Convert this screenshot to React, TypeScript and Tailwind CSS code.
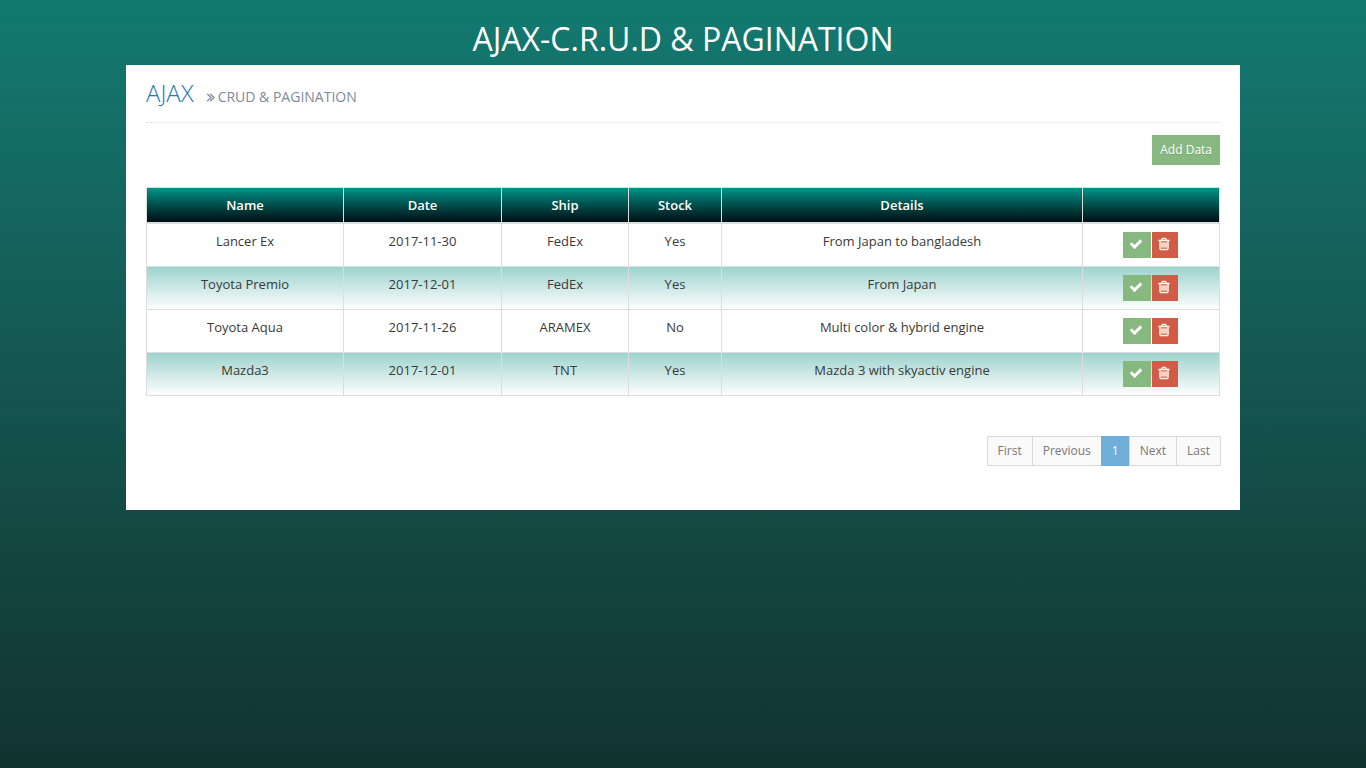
import type { ReactNode } from 'react';

type Shipment = {
  name: string;
  date: string;
  ship: string;
  stock: string;
  details: string;
};

const shipments: Shipment[] = [
  { name: 'Lancer Ex', date: '2017-11-30', ship: 'FedEx', stock: 'Yes', details: 'From Japan to bangladesh' },
  { name: 'Toyota Premio', date: '2017-12-01', ship: 'FedEx', stock: 'Yes', details: 'From Japan' },
  { name: 'Toyota Aqua', date: '2017-11-26', ship: 'ARAMEX', stock: 'No', details: 'Multi color & hybrid engine' },
  { name: 'Mazda3', date: '2017-12-01', ship: 'TNT', stock: 'Yes', details: 'Mazda 3 with skyactiv engine' },
];

const pages = ['First', 'Previous', '1', 'Next', 'Last'];

function Icon({ path, className }: { path: string; className: string }) {
  return (
    <svg viewBox="0 0 1792 1792" fill="currentColor" aria-hidden="true" className={className}>
      <path d={path} />
    </svg>
  );
}

const checkPath =
  'M1671 566q0 40-28 68l-724 724-136 136q-28 28-68 28t-68-28l-136-136-362-362q-28-28-28-68t28-68l136-136q28-28 68-28t68 28l294 295 656-657q28-28 68-28t68 28l136 136q28 28 28 68z';
const trashPath =
  'M704 736v576q0 14-9 23t-23 9h-64q-14 0-23-9t-9-23v-576q0-14 9-23t23-9h64q14 0 23 9t9 23zm256 0v576q0 14-9 23t-23 9h-64q-14 0-23-9t-9-23v-576q0-14 9-23t23-9h64q14 0 23 9t9 23zm256 0v576q0 14-9 23t-23 9h-64q-14 0-23-9t-9-23v-576q0-14 9-23t23-9h64q14 0 23 9t9 23zm128 724v-948h-896v948q0 22 7 40.5t14.5 27 10.5 8.5h832q3 0 10.5-8.5t14.5-27 7-40.5zm-672-1076h448l-48-117q-7-9-17-11h-317q-10 2-17 11zm928 32v64q0 14-9 23t-23 9h-96v948q0 83-47 143.5t-113 60.5h-832q-66 0-113-58.5t-47-141.5v-952h-96q-14 0-23-9t-9-23v-64q0-14 9-23t23-9h309l70-167q15-37 54-63t79-26h320q40 0 79 26t54 63l70 167h309q14 0 23 9t9 23z';
const anglesPath =
  'M979 960q0 13-10 23l-466 466q-10 10-23 10t-23-10l-50-50q-10-10-10-23t10-23l393-393-393-393q-10-10-10-23t10-23l50-50q10-10 23-10t23 10l466 466q10 10 10 23zm384 0q0 13-10 23l-466 466q-10 10-23 10t-23-10l-50-50q-10-10-10-23t10-23l393-393-393-393q-10-10-10-23t10-23l50-50q10-10 23-10t23 10l466 466q10 10 10 23z';

function HeadCell({ children }: { children?: ReactNode }) {
  return (
    <th scope="col" className="border border-b-2 border-[#ddd] p-2 font-semibold">
      {children}
    </th>
  );
}

function Cell({ children }: { children: ReactNode }) {
  return <td className="border border-[#ddd] p-2 align-top">{children}</td>;
}

function ShipmentTable() {
  return (
    <table className="w-full table-fixed border-collapse text-center text-[13px] leading-[18px] text-[#393939]">
      <colgroup>
        <col className="w-[197px]" />
        <col className="w-[158px]" />
        <col className="w-[127px]" />
        <col className="w-[93px]" />
        <col className="w-[361px]" />
        <col className="w-[137px]" />
      </colgroup>
      <thead>
        <tr className="bg-linear-to-b from-[#009688] to-[#000a10] text-white">
          <HeadCell>Name</HeadCell>
          <HeadCell>Date</HeadCell>
          <HeadCell>Ship</HeadCell>
          <HeadCell>Stock</HeadCell>
          <HeadCell>Details</HeadCell>
          <HeadCell />
        </tr>
      </thead>
      <tbody>
        {shipments.map((item) => (
          <tr key={item.name} className="even:bg-linear-to-b even:from-[#9dd3ce] even:to-white">
            <Cell>{item.name}</Cell>
            <Cell>{item.date}</Cell>
            <Cell>{item.ship}</Cell>
            <Cell>{item.stock}</Cell>
            <Cell>{item.details}</Cell>
            <Cell>
              <div className="flex justify-center gap-px pr-[2px]">
                <button type="button" aria-label="Edit" className="flex h-[26px] w-7 items-center justify-center bg-[#87b87f] pr-[2px] pb-[2px] text-white">
                  <Icon path={checkPath} className="size-[14px]" />
                </button>
                <button type="button" aria-label="Delete" className="flex h-[26px] w-[26px] items-center justify-center bg-[#d15b47] pr-[2px] pb-[2px] text-[#fff6e6]">
                  <Icon path={trashPath} className="size-[14px] stroke-current stroke-[70]" />
                </button>
              </div>
            </Cell>
          </tr>
        ))}
      </tbody>
    </table>
  );
}

function Pagination() {
  return (
    <nav aria-label="Pagination">
      <ul className="-mr-px flex justify-end text-xs leading-7">
        {pages.map((page) => (
          <li key={page} className="-ml-px">
            {page === '1' ? (
              <a href="#" aria-current="page" className="block border border-[#6faed9] bg-[#6faed9] px-[10px] text-white">
                {page}
              </a>
            ) : (
              <a href="#" className="block border border-[#d9d9d9] bg-[#fafafa] px-[10px] text-[#777]">
                {page}
              </a>
            )}
          </li>
        ))}
      </ul>
    </nav>
  );
}

export default function App() {
  return (
    <div className="min-h-screen bg-linear-to-b from-[#127a71] to-[#113330] px-5 pt-5 font-['Open_Sans',sans-serif]">
      <h1 className="pb-[7px] text-center text-[32px] leading-[38px] text-white">AJAX-C.R.U.D &amp; PAGINATION</h1>
      <main className="mx-auto max-w-[1114px] bg-white px-5 pt-3 pb-11">
        <header className="border-b border-dotted border-[#ddd] pb-[13px]">
          <h2 className="flex items-baseline gap-[10px] text-2xl leading-8 font-light text-[#2679b5]">
            AJAX
            <small className="text-sm font-normal text-[#8089a0]">
              <Icon path={anglesPath} className="-mb-[2px] inline size-[14px] stroke-current stroke-[50] align-baseline" />
              CRUD &amp; PAGINATION
            </small>
          </h2>
        </header>
        <div className="flex justify-end pt-3 pb-[22px]">
          <button type="button" className="h-[30px] bg-[#87b87f] px-2 text-xs text-white text-shadow-2xs">
            Add Data
          </button>
        </div>
        <ShipmentTable />
        <div className="pt-10">
          <Pagination />
        </div>
      </main>
    </div>
  );
}
